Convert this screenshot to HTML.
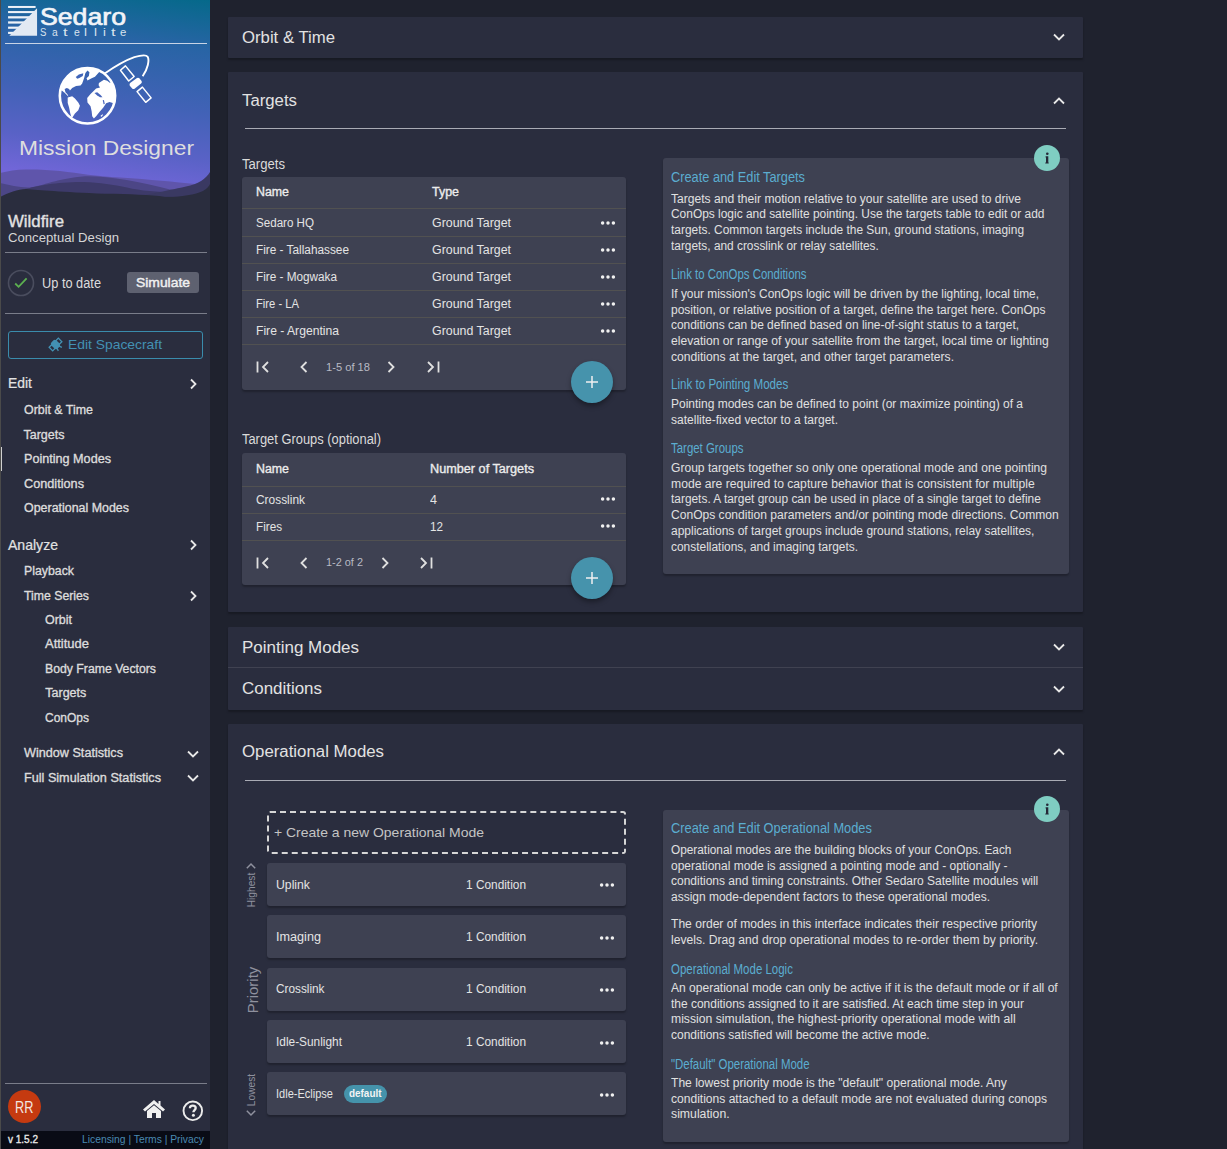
<!DOCTYPE html>
<html><head><meta charset="utf-8"><style>
html,body{margin:0;padding:0;}
body{width:1227px;height:1149px;overflow:hidden;position:relative;background:#1f222e;font-family:"Liberation Sans",sans-serif;}
.t{position:absolute;white-space:pre;line-height:1;}
</style></head><body>
<div style="position:absolute;left:0px;top:0px;width:210px;height:1149px;background:#2a2d3e;"></div>
<div style="position:absolute;left:0;top:0;width:210px;height:200px;background:linear-gradient(188deg,#05698a 0%,#2864a5 22%,#4262b7 50%,#5962c6 70%,#7166d8 86%,#7a68e0 100%);"></div>
<svg style="position:absolute;left:0;top:160px" width="210" height="45" viewBox="0 0 210 45">
<path d="M0 13 C8 11 16 9.5 26 9.4 C38 9.3 50 9.8 60 11 C80 13.5 95 16 120 17.5 C150 19.5 175 22 195 24 L210 24 L210 45 L0 45 Z" fill="#5f55ab"/>
<path d="M0 23 C10 25 20 28 30 27.5 C42 26 58 18.5 85 16.3 C110 16 140 22 170 29.5 L210 30 L210 45 L0 45 Z" fill="#4c4686"/>
<path d="M25 29 C38 26 50 23 77 22 C95 22 108 24 122 26.5 C135 29.5 150 32 170 32 L210 32 L210 45 L25 45 Z" fill="#3d3a69"/>
<path d="M210 12 C206 19 198 24 186 26.5 C175 29 165 31 150 34 L140 36 L210 36 Z" fill="#3a3962"/>
<path d="M0 37 C8 33 18 29 26 29 C40 30 60 32 105 33.8 C130 34 150 35 165 36.8 C180 37 195 35 203 31 C207 29 209 26 210 24 L210 45 L0 45 Z" fill="#2a2d3e"/>
</svg>
<div style="position:absolute;left:0px;top:0px;width:1px;height:1149px;background:#4a4a4a;"></div>
<svg style="position:absolute;left:5px;top:3px" width="37" height="37" viewBox="0 0 1149 1149">
<g fill="#eef2f8">
<rect x="95" y="92" width="855" height="62"/>
<rect x="95" y="250" width="895" height="64"/>
<rect x="95" y="410" width="895" height="70"/>
<rect x="95" y="570" width="895" height="70"/>
<rect x="95" y="733" width="895" height="68"/>
<rect x="95" y="895" width="895" height="66"/>
</g>
<path d="M995 165 L995 1018 L135 1018 Z" fill="#e2e9f3"/>
</svg>
<div style="position:absolute;left:5px;top:43px;width:202px;height:1px;background:#c8d4e6;"></div>
<svg style="position:absolute;left:56px;top:64px" width="64" height="64" viewBox="0 0 1149 1149">
<defs><clipPath id="gc"><circle cx="565" cy="570" r="500"/></clipPath></defs>
<circle cx="565" cy="570" r="497" fill="none" stroke="#fff" stroke-width="46"/>
<g clip-path="url(#gc)" fill="#fff">
<path d="M60 470 L60 0 L780 0 L780 140 L700 230 L640 255 L565 295 L548 255 L590 215 L600 150 L565 115 L528 160 L505 250 L470 350 L440 385 L360 395 L290 430 L250 475 L235 450 L195 430 L155 450 L170 505 L205 545 L225 590 L160 520 L110 480 Z"/>
<path d="M210 600 L290 580 L340 620 L400 690 L430 750 L400 830 L340 890 L300 950 L280 975 L255 880 L235 780 L210 700 Z"/>
<path d="M770 340 L860 285 L920 300 L965 335 L1120 335 L1120 700 L1020 700 L960 680 L900 705 L850 780 L780 860 L720 940 L680 980 L650 940 L640 850 L620 760 L565 690 L560 610 L620 540 L680 480 L720 440 L790 420 L765 380 Z"/>
<path d="M800 930 L835 900 L845 915 L810 950 Z"/>
</g>
<path d="M355 235 L410 190 L490 165 L480 215 L420 250 L380 265 Z" fill="#3f64b8"/>
<path d="M690 520 L740 505 L800 555 L835 595 L790 595 L735 560 Z" fill="#4766bb"/>
<path d="M850 650 L865 720" stroke="#4a66bc" stroke-width="22"/>
</svg>
<svg style="position:absolute;left:110px;top:55px;overflow:visible" width="50" height="50" viewBox="0 0 1149 1149">
<path d="M-130 430 C60 300 330 130 560 50 C700 10 830 -10 865 40 C910 120 870 320 750 490" fill="none" stroke="#fff" stroke-width="44"/>
<path d="M240 352 L355 250 L555 495 L430 598 Z" fill="none" stroke="#fff" stroke-width="34" stroke-linejoin="round"/>
<path d="M622 842 L745 738 L945 985 L820 1087 Z" fill="none" stroke="#fff" stroke-width="34" stroke-linejoin="round"/>
<path d="M470 640 L620 530 Q650 510 675 535 L725 600 Q745 630 715 655 L565 775 Q535 795 510 770 L455 705 Q435 670 470 640 Z" fill="#fff"/>
</svg>
<div style="position:absolute;left:5px;top:252px;width:202px;height:1px;background:#7a7d8a;"></div>
<svg style="position:absolute;left:7px;top:269px" width="28" height="28" viewBox="0 0 28 28">
<circle cx="14" cy="14" r="12.5" fill="none" stroke="#4a4d5e" stroke-width="1.6"/>
<path d="M8.2 14.5 L11.6 17.8 L19.6 9.3" fill="none" stroke="#5cb050" stroke-width="1.8"/>
</svg>
<div style="position:absolute;left:126.7px;top:272px;width:72.3px;height:21px;background:#5e6170;border-radius:3px;"></div>
<div style="position:absolute;left:5px;top:313px;width:202px;height:1px;background:#7a7d8a;"></div>
<div style="position:absolute;left:8px;top:330.5px;width:195px;height:28.5px;background:transparent;box-sizing:border-box;border:1.5px solid #3a8cac;border-radius:3px;"></div>
<svg style="position:absolute;left:48px;top:337px" width="15" height="15" viewBox="0 0 15 15">
<g transform="rotate(-45 7.5 7.5)" fill="none" stroke="#4391b3" stroke-width="1.3">
<rect x="1" y="5" width="3.6" height="5"/><rect x="10.4" y="5" width="3.6" height="5"/>
<rect x="5" y="3.8" width="5" height="7.4" rx="1" fill="#4391b3"/>
<path d="M6 11.2 L5 14 M9 11.2 L10 14" />
</g></svg>
<svg style="position:absolute;left:187px;top:378px" width="12" height="12" viewBox="0 0 12 12"><path d="M4 1.5 L8.5 6 L4 10.5" fill="none" stroke="#e8e8e8" stroke-width="1.8"/></svg>
<div style="position:absolute;left:1px;top:447px;width:1px;height:24px;background:#d0d0d0;"></div>
<svg style="position:absolute;left:187px;top:539px" width="12" height="12" viewBox="0 0 12 12"><path d="M4 1.5 L8.5 6 L4 10.5" fill="none" stroke="#e8e8e8" stroke-width="1.8"/></svg>
<svg style="position:absolute;left:187px;top:589.5px" width="12" height="12" viewBox="0 0 12 12"><path d="M4 1.5 L8.5 6 L4 10.5" fill="none" stroke="#e8e8e8" stroke-width="1.8"/></svg>
<svg style="position:absolute;left:186px;top:746.5px" width="14" height="14" viewBox="0 0 14 14"><path d="M2 4.5 L7 9.5 L12 4.5" fill="none" stroke="#e8e8e8" stroke-width="1.8"/></svg>
<svg style="position:absolute;left:186px;top:771px" width="14" height="14" viewBox="0 0 14 14"><path d="M2 4.5 L7 9.5 L12 4.5" fill="none" stroke="#e8e8e8" stroke-width="1.8"/></svg>
<div style="position:absolute;left:5px;top:1083px;width:202px;height:1px;background:#7a7d8a;"></div>
<div style="position:absolute;left:8px;top:1090px;width:33px;height:33px;border-radius:50%;background:#c53a10;"></div>
<svg style="position:absolute;left:142px;top:1099px" width="24" height="20" viewBox="0 0 24 20">
<path d="M12 1 L1 10.5 L3 12.5 L12 5 L21 12.5 L23 10.5 L18.5 6.6 V2 H16.5 V4.9 Z" fill="#f0f0f0"/>
<path d="M5 12 L12 6.3 L19 12 V19 H14 V14 H10 V19 H5 Z" fill="#f0f0f0"/></svg>
<svg style="position:absolute;left:181px;top:1099px" width="23" height="23" viewBox="0 0 23 23">
<circle cx="11.8" cy="11.8" r="9.3" fill="none" stroke="#ececec" stroke-width="1.9"/>
<path d="M8.9 9.2 C8.9 7.6 10.2 6.6 11.8 6.6 C13.5 6.6 14.7 7.6 14.7 9.1 C14.7 11 12.4 11.2 12.4 13.2" fill="none" stroke="#ececec" stroke-width="2.3"/>
<circle cx="12.4" cy="16.2" r="1.5" fill="#ececec"/></svg>
<div style="position:absolute;left:1px;top:1131px;width:209px;height:18px;background:#090b15;"></div>
<div style="position:absolute;left:228px;top:17px;width:855px;height:41px;background:#2a2d3e;border-radius:1px;box-shadow:0 2px 2px rgba(0,0,0,0.25);"></div>
<svg style="position:absolute;left:1051.5px;top:30px" width="14" height="14" viewBox="0 0 14 14"><path d="M2 4.5 L7 9.5 L12 4.5" fill="none" stroke="#e8e8e8" stroke-width="1.8"/></svg>
<div style="position:absolute;left:228px;top:72px;width:855px;height:540px;background:#2a2d3e;border-radius:1px;box-shadow:0 2px 2px rgba(0,0,0,0.25);"></div>
<svg style="position:absolute;left:1051.5px;top:93.5px" width="14" height="14" viewBox="0 0 14 14"><path d="M2 9.5 L7 4.5 L12 9.5" fill="none" stroke="#e8e8e8" stroke-width="1.8"/></svg>
<div style="position:absolute;left:245px;top:128px;width:821px;height:1px;background:#a9abb4;"></div>
<div style="position:absolute;left:242px;top:177px;width:384px;height:213px;background:#3e4152;border-radius:3px;box-shadow:0 2px 2px rgba(0,0,0,0.25);"></div>
<div style="position:absolute;left:242px;top:208px;width:384px;height:1px;background:#515151;"></div>
<svg style="position:absolute;left:600px;top:219.5px" width="16" height="6" viewBox="0 0 16 6"><circle cx="2.6" cy="3" r="1.75" fill="#f0f0f0"/><circle cx="8" cy="3" r="1.75" fill="#f0f0f0"/><circle cx="13.4" cy="3" r="1.75" fill="#f0f0f0"/></svg>
<div style="position:absolute;left:242px;top:235.5px;width:384px;height:1px;background:#515151;"></div>
<svg style="position:absolute;left:600px;top:246.5px" width="16" height="6" viewBox="0 0 16 6"><circle cx="2.6" cy="3" r="1.75" fill="#f0f0f0"/><circle cx="8" cy="3" r="1.75" fill="#f0f0f0"/><circle cx="13.4" cy="3" r="1.75" fill="#f0f0f0"/></svg>
<div style="position:absolute;left:242px;top:262.5px;width:384px;height:1px;background:#515151;"></div>
<svg style="position:absolute;left:600px;top:273.5px" width="16" height="6" viewBox="0 0 16 6"><circle cx="2.6" cy="3" r="1.75" fill="#f0f0f0"/><circle cx="8" cy="3" r="1.75" fill="#f0f0f0"/><circle cx="13.4" cy="3" r="1.75" fill="#f0f0f0"/></svg>
<div style="position:absolute;left:242px;top:289.5px;width:384px;height:1px;background:#515151;"></div>
<svg style="position:absolute;left:600px;top:300.5px" width="16" height="6" viewBox="0 0 16 6"><circle cx="2.6" cy="3" r="1.75" fill="#f0f0f0"/><circle cx="8" cy="3" r="1.75" fill="#f0f0f0"/><circle cx="13.4" cy="3" r="1.75" fill="#f0f0f0"/></svg>
<div style="position:absolute;left:242px;top:316.5px;width:384px;height:1px;background:#515151;"></div>
<svg style="position:absolute;left:600px;top:327.5px" width="16" height="6" viewBox="0 0 16 6"><circle cx="2.6" cy="3" r="1.75" fill="#f0f0f0"/><circle cx="8" cy="3" r="1.75" fill="#f0f0f0"/><circle cx="13.4" cy="3" r="1.75" fill="#f0f0f0"/></svg>
<div style="position:absolute;left:242px;top:343.5px;width:384px;height:1px;background:#515151;"></div>
<svg style="position:absolute;left:255px;top:360px" width="16" height="14" viewBox="0 0 16 14"><path d="M2.5 1.5 V12.5" stroke="#e0e0e0" stroke-width="1.8"/><path d="M13 2 L8 7 L13 12" fill="none" stroke="#e0e0e0" stroke-width="1.8"/></svg>
<svg style="position:absolute;left:298px;top:360px" width="12" height="14" viewBox="0 0 12 14"><path d="M8.5 2 L3.5 7 L8.5 12" fill="none" stroke="#e0e0e0" stroke-width="1.8"/></svg>
<svg style="position:absolute;left:385px;top:360px" width="12" height="14" viewBox="0 0 12 14"><path d="M3.5 2 L8.5 7 L3.5 12" fill="none" stroke="#e0e0e0" stroke-width="1.8"/></svg>
<svg style="position:absolute;left:425px;top:360px" width="16" height="14" viewBox="0 0 16 14"><path d="M3 2 L8 7 L3 12" fill="none" stroke="#e0e0e0" stroke-width="1.8"/><path d="M13.5 1.5 V12.5" stroke="#e0e0e0" stroke-width="1.8"/></svg>
<div style="position:absolute;left:571px;top:361px;width:42px;height:42px;border-radius:50%;background:#4693ac;box-shadow:0 3px 5px rgba(0,0,0,0.35);"></div>
<svg style="position:absolute;left:585px;top:375px" width="14" height="14" viewBox="0 0 14 14"><path d="M7 1 V13 M1 7 H13" stroke="#f0f0f0" stroke-width="1.5"/></svg>
<div style="position:absolute;left:242px;top:453px;width:384px;height:132px;background:#3e4152;border-radius:3px;box-shadow:0 2px 2px rgba(0,0,0,0.25);"></div>
<div style="position:absolute;left:242px;top:485.5px;width:384px;height:1px;background:#515151;"></div>
<svg style="position:absolute;left:600px;top:496px" width="16" height="6" viewBox="0 0 16 6"><circle cx="2.6" cy="3" r="1.75" fill="#f0f0f0"/><circle cx="8" cy="3" r="1.75" fill="#f0f0f0"/><circle cx="13.4" cy="3" r="1.75" fill="#f0f0f0"/></svg>
<svg style="position:absolute;left:600px;top:523px" width="16" height="6" viewBox="0 0 16 6"><circle cx="2.6" cy="3" r="1.75" fill="#f0f0f0"/><circle cx="8" cy="3" r="1.75" fill="#f0f0f0"/><circle cx="13.4" cy="3" r="1.75" fill="#f0f0f0"/></svg>
<div style="position:absolute;left:242px;top:512.5px;width:384px;height:1px;background:#515151;"></div>
<div style="position:absolute;left:242px;top:539.5px;width:384px;height:1px;background:#515151;"></div>
<svg style="position:absolute;left:255px;top:555.5px" width="16" height="14" viewBox="0 0 16 14"><path d="M2.5 1.5 V12.5" stroke="#e0e0e0" stroke-width="1.8"/><path d="M13 2 L8 7 L13 12" fill="none" stroke="#e0e0e0" stroke-width="1.8"/></svg>
<svg style="position:absolute;left:298px;top:555.5px" width="12" height="14" viewBox="0 0 12 14"><path d="M8.5 2 L3.5 7 L8.5 12" fill="none" stroke="#e0e0e0" stroke-width="1.8"/></svg>
<svg style="position:absolute;left:379px;top:555.5px" width="12" height="14" viewBox="0 0 12 14"><path d="M3.5 2 L8.5 7 L3.5 12" fill="none" stroke="#e0e0e0" stroke-width="1.8"/></svg>
<svg style="position:absolute;left:418px;top:555.5px" width="16" height="14" viewBox="0 0 16 14"><path d="M3 2 L8 7 L3 12" fill="none" stroke="#e0e0e0" stroke-width="1.8"/><path d="M13.5 1.5 V12.5" stroke="#e0e0e0" stroke-width="1.8"/></svg>
<div style="position:absolute;left:571px;top:556.5px;width:42px;height:42px;border-radius:50%;background:#4693ac;box-shadow:0 3px 5px rgba(0,0,0,0.35);"></div>
<svg style="position:absolute;left:585px;top:570.5px" width="14" height="14" viewBox="0 0 14 14"><path d="M7 1 V13 M1 7 H13" stroke="#f0f0f0" stroke-width="1.5"/></svg>
<div style="position:absolute;left:662.5px;top:158px;width:406px;height:416px;background:#3e4152;border-radius:3px;box-shadow:0 2px 2px rgba(0,0,0,0.25);"></div>
<div style="position:absolute;left:1034px;top:145px;width:26px;height:26px;border-radius:50%;background:#7fcdc2;"></div>
<svg style="position:absolute;left:1042px;top:151px" width="10" height="14" viewBox="0 0 10 14"><circle cx="5.3" cy="2.7" r="1.3" fill="#252838"/><path d="M3.6 5.3 H6.3 V11.4 H6.7 V12.6 H3.3 V11.6 H4 V6.4 H3.6 Z" fill="#252838"/></svg>
<div style="position:absolute;left:228px;top:626.5px;width:855px;height:83.5px;background:#2a2d3e;border-radius:1px;box-shadow:0 2px 2px rgba(0,0,0,0.25);"></div>
<div style="position:absolute;left:228px;top:667px;width:855px;height:1px;background:#404251;"></div>
<svg style="position:absolute;left:1051.5px;top:640px" width="14" height="14" viewBox="0 0 14 14"><path d="M2 4.5 L7 9.5 L12 4.5" fill="none" stroke="#e8e8e8" stroke-width="1.8"/></svg>
<svg style="position:absolute;left:1051.5px;top:682px" width="14" height="14" viewBox="0 0 14 14"><path d="M2 4.5 L7 9.5 L12 4.5" fill="none" stroke="#e8e8e8" stroke-width="1.8"/></svg>
<div style="position:absolute;left:228px;top:724px;width:855px;height:440px;background:#2a2d3e;border-radius:1px;box-shadow:0 2px 2px rgba(0,0,0,0.25);"></div>
<svg style="position:absolute;left:1051.5px;top:744.5px" width="14" height="14" viewBox="0 0 14 14"><path d="M2 9.5 L7 4.5 L12 9.5" fill="none" stroke="#e8e8e8" stroke-width="1.8"/></svg>
<div style="position:absolute;left:245px;top:780px;width:821px;height:1px;background:#a9abb4;"></div>
<div style="position:absolute;left:267px;top:810.5px;width:359px;height:43px;box-sizing:border-box;border:2px dashed #d6d6d6;border-radius:3px;"></div>
<div style="position:absolute;left:267px;top:863px;width:359px;height:43px;background:#3e4152;border-radius:3px;box-shadow:0 2px 2px rgba(0,0,0,0.25);"></div>
<svg style="position:absolute;left:598.5px;top:882.3px" width="16" height="6" viewBox="0 0 16 6"><circle cx="2.6" cy="3" r="1.75" fill="#f0f0f0"/><circle cx="8" cy="3" r="1.75" fill="#f0f0f0"/><circle cx="13.4" cy="3" r="1.75" fill="#f0f0f0"/></svg>
<div style="position:absolute;left:267px;top:915.3px;width:359px;height:43px;background:#3e4152;border-radius:3px;box-shadow:0 2px 2px rgba(0,0,0,0.25);"></div>
<svg style="position:absolute;left:598.5px;top:934.5999999999999px" width="16" height="6" viewBox="0 0 16 6"><circle cx="2.6" cy="3" r="1.75" fill="#f0f0f0"/><circle cx="8" cy="3" r="1.75" fill="#f0f0f0"/><circle cx="13.4" cy="3" r="1.75" fill="#f0f0f0"/></svg>
<div style="position:absolute;left:267px;top:967.5px;width:359px;height:43px;background:#3e4152;border-radius:3px;box-shadow:0 2px 2px rgba(0,0,0,0.25);"></div>
<svg style="position:absolute;left:598.5px;top:986.8px" width="16" height="6" viewBox="0 0 16 6"><circle cx="2.6" cy="3" r="1.75" fill="#f0f0f0"/><circle cx="8" cy="3" r="1.75" fill="#f0f0f0"/><circle cx="13.4" cy="3" r="1.75" fill="#f0f0f0"/></svg>
<div style="position:absolute;left:267px;top:1020.2px;width:359px;height:43px;background:#3e4152;border-radius:3px;box-shadow:0 2px 2px rgba(0,0,0,0.25);"></div>
<svg style="position:absolute;left:598.5px;top:1039.5px" width="16" height="6" viewBox="0 0 16 6"><circle cx="2.6" cy="3" r="1.75" fill="#f0f0f0"/><circle cx="8" cy="3" r="1.75" fill="#f0f0f0"/><circle cx="13.4" cy="3" r="1.75" fill="#f0f0f0"/></svg>
<div style="position:absolute;left:267px;top:1072.2px;width:359px;height:43px;background:#3e4152;border-radius:3px;box-shadow:0 2px 2px rgba(0,0,0,0.25);"></div>
<svg style="position:absolute;left:598.5px;top:1091.5px" width="16" height="6" viewBox="0 0 16 6"><circle cx="2.6" cy="3" r="1.75" fill="#f0f0f0"/><circle cx="8" cy="3" r="1.75" fill="#f0f0f0"/><circle cx="13.4" cy="3" r="1.75" fill="#f0f0f0"/></svg>
<div style="position:absolute;left:344px;top:1085.3px;width:43px;height:17.7px;border-radius:9px;background:#4593ab;"></div>
<div style="position:absolute;left:211.5px;top:850px;width:80px;height:80px;"><span style="position:absolute;left:50%;top:50%;transform:translate(-50%,-50%) rotate(-90deg);white-space:nowrap;font-size:10.2px;line-height:10.2px;color:#8f919e;">Highest</span></div>
<svg style="position:absolute;left:245px;top:861px" width="12" height="9" viewBox="0 0 12 9"><path d="M1.8 7.2 L6 3 L10.2 7.2" fill="none" stroke="#8f919e" stroke-width="1.5"/></svg>
<div style="position:absolute;left:211.5px;top:949.5px;width:80px;height:80px;"><span style="position:absolute;left:50%;top:50%;transform:translate(-50%,-50%) rotate(-90deg);white-space:nowrap;font-size:15px;line-height:15px;color:#8f919e;">Priority</span></div>
<div style="position:absolute;left:211.5px;top:1050.4px;width:80px;height:80px;"><span style="position:absolute;left:50%;top:50%;transform:translate(-50%,-50%) rotate(-90deg);white-space:nowrap;font-size:10.2px;line-height:10.2px;color:#8f919e;">Lowest</span></div>
<svg style="position:absolute;left:244.5px;top:1109px" width="12" height="9" viewBox="0 0 12 9"><path d="M1.8 1.8 L6 6 L10.2 1.8" fill="none" stroke="#8f919e" stroke-width="1.5"/></svg>
<div style="position:absolute;left:662.5px;top:809.5px;width:406px;height:332px;background:#3e4152;border-radius:3px;box-shadow:0 2px 2px rgba(0,0,0,0.25);"></div>
<div style="position:absolute;left:1034px;top:795.5px;width:26px;height:26px;border-radius:50%;background:#7fcdc2;"></div>
<svg style="position:absolute;left:1042px;top:801.5px" width="10" height="14" viewBox="0 0 10 14"><circle cx="5.3" cy="2.7" r="1.3" fill="#252838"/><path d="M3.6 5.3 H6.3 V11.4 H6.7 V12.6 H3.3 V11.6 H4 V6.4 H3.6 Z" fill="#252838"/></svg>
<span class="t" style="left:40px;top:5.00px;font-size:24px;color:#f2f4f8;font-weight:400;font-family:'Liberation Sans',sans-serif;transform:scaleX(1.1112);transform-origin:0 0;-webkit-text-stroke:0.7px;">Sedaro</span>
<span class="t" style="left:39.9px;top:28.00px;font-size:10px;color:#d8e2ee;font-weight:400;font-family:'Liberation Sans',sans-serif;transform:scaleX(0.9593);transform-origin:0 0;">S</span>
<span class="t" style="left:51.9px;top:28.00px;font-size:10px;color:#d8e2ee;font-weight:400;font-family:'Liberation Sans',sans-serif;transform:scaleX(1.0247);transform-origin:0 0;">a</span>
<span class="t" style="left:63.4px;top:28.00px;font-size:10px;color:#d8e2ee;font-weight:400;font-family:'Liberation Sans',sans-serif;transform:scaleX(1.6539);transform-origin:0 0;">t</span>
<span class="t" style="left:73.60000000000001px;top:28.00px;font-size:10px;color:#d8e2ee;font-weight:400;font-family:'Liberation Sans',sans-serif;transform:scaleX(1.0427);transform-origin:0 0;">e</span>
<span class="t" style="left:84.4px;top:28.00px;font-size:10px;color:#d8e2ee;font-weight:400;font-family:'Liberation Sans',sans-serif;transform:scaleX(1.3427);transform-origin:0 0;">l</span>
<span class="t" style="left:94.10000000000001px;top:28.00px;font-size:10px;color:#d8e2ee;font-weight:400;font-family:'Liberation Sans',sans-serif;transform:scaleX(1.3427);transform-origin:0 0;">l</span>
<span class="t" style="left:102.7px;top:28.00px;font-size:10px;color:#d8e2ee;font-weight:400;font-family:'Liberation Sans',sans-serif;transform:scaleX(1.2979);transform-origin:0 0;">i</span>
<span class="t" style="left:111.30000000000001px;top:28.00px;font-size:10px;color:#d8e2ee;font-weight:400;font-family:'Liberation Sans',sans-serif;transform:scaleX(1.6539);transform-origin:0 0;">t</span>
<span class="t" style="left:120.4px;top:28.00px;font-size:10px;color:#d8e2ee;font-weight:400;font-family:'Liberation Sans',sans-serif;transform:scaleX(1.1326);transform-origin:0 0;">e</span>
<span class="t" style="left:18.6px;top:138.00px;font-size:20.5px;color:#dedede;font-weight:400;font-family:'Liberation Sans',sans-serif;transform:scaleX(1.1130);transform-origin:0 0;">Mission Designer</span>
<span class="t" style="left:8px;top:214.00px;font-size:16px;color:#e2e2e2;font-weight:400;font-family:'Liberation Sans',sans-serif;transform:scaleX(1.0498);transform-origin:0 0;-webkit-text-stroke:0.35px;">Wildfire</span>
<span class="t" style="left:8px;top:232.00px;font-size:12.5px;color:#d6d6d6;font-weight:400;font-family:'Liberation Sans',sans-serif;transform:scaleX(1.0509);transform-origin:0 0;">Conceptual Design</span>
<span class="t" style="left:42px;top:276.00px;font-size:14px;color:#dcdcdc;font-weight:400;font-family:'Liberation Sans',sans-serif;transform:scaleX(0.9132);transform-origin:0 0;">Up to date</span>
<span class="t" style="left:135.7px;top:276.00px;font-size:13.5px;color:#f0f0f0;font-weight:400;font-family:'Liberation Sans',sans-serif;transform:scaleX(1.0280);transform-origin:0 0;-webkit-text-stroke:0.45px;">Simulate</span>
<span class="t" style="left:68px;top:338.00px;font-size:13px;color:#4391b3;font-weight:400;font-family:'Liberation Sans',sans-serif;transform:scaleX(1.0663);transform-origin:0 0;">Edit Spacecraft</span>
<span class="t" style="left:8px;top:375.00px;font-size:15px;color:#e2e2e2;font-weight:400;font-family:'Liberation Sans',sans-serif;transform:scaleX(0.9281);transform-origin:0 0;-webkit-text-stroke:0.2px;">Edit</span>
<span class="t" style="left:23.5px;top:404.00px;font-size:12.5px;color:#dcdcdc;font-weight:400;font-family:'Liberation Sans',sans-serif;transform:scaleX(0.9933);transform-origin:0 0;-webkit-text-stroke:0.35px;">Orbit & Time</span>
<span class="t" style="left:23.5px;top:429.00px;font-size:12.5px;color:#dcdcdc;font-weight:400;font-family:'Liberation Sans',sans-serif;-webkit-text-stroke:0.35px;">Targets</span>
<span class="t" style="left:23.5px;top:453.00px;font-size:12.5px;color:#dcdcdc;font-weight:400;font-family:'Liberation Sans',sans-serif;transform:scaleX(1.0096);transform-origin:0 0;-webkit-text-stroke:0.35px;">Pointing Modes</span>
<span class="t" style="left:23.5px;top:478.00px;font-size:12.5px;color:#dcdcdc;font-weight:400;font-family:'Liberation Sans',sans-serif;transform:scaleX(1.0156);transform-origin:0 0;-webkit-text-stroke:0.35px;">Conditions</span>
<span class="t" style="left:23.5px;top:502.00px;font-size:12.5px;color:#dcdcdc;font-weight:400;font-family:'Liberation Sans',sans-serif;transform:scaleX(0.9941);transform-origin:0 0;-webkit-text-stroke:0.35px;">Operational Modes</span>
<span class="t" style="left:8px;top:537.00px;font-size:15px;color:#e2e2e2;font-weight:400;font-family:'Liberation Sans',sans-serif;transform:scaleX(0.9368);transform-origin:0 0;-webkit-text-stroke:0.2px;">Analyze</span>
<span class="t" style="left:23.5px;top:565.00px;font-size:12.5px;color:#dcdcdc;font-weight:400;font-family:'Liberation Sans',sans-serif;transform:scaleX(0.9855);transform-origin:0 0;-webkit-text-stroke:0.35px;">Playback</span>
<span class="t" style="left:23.5px;top:590.00px;font-size:12.5px;color:#dcdcdc;font-weight:400;font-family:'Liberation Sans',sans-serif;transform:scaleX(0.9816);transform-origin:0 0;-webkit-text-stroke:0.35px;">Time Series</span>
<span class="t" style="left:45.3px;top:614.00px;font-size:12.5px;color:#dcdcdc;font-weight:400;font-family:'Liberation Sans',sans-serif;transform:scaleX(0.9965);transform-origin:0 0;-webkit-text-stroke:0.35px;">Orbit</span>
<span class="t" style="left:45.3px;top:638.00px;font-size:12.5px;color:#dcdcdc;font-weight:400;font-family:'Liberation Sans',sans-serif;transform:scaleX(1.0380);transform-origin:0 0;-webkit-text-stroke:0.35px;">Attitude</span>
<span class="t" style="left:45.3px;top:663.00px;font-size:12.5px;color:#dcdcdc;font-weight:400;font-family:'Liberation Sans',sans-serif;transform:scaleX(0.9801);transform-origin:0 0;-webkit-text-stroke:0.35px;">Body Frame Vectors</span>
<span class="t" style="left:45.3px;top:687.00px;font-size:12.5px;color:#dcdcdc;font-weight:400;font-family:'Liberation Sans',sans-serif;-webkit-text-stroke:0.35px;">Targets</span>
<span class="t" style="left:45.3px;top:712.00px;font-size:12.5px;color:#dcdcdc;font-weight:400;font-family:'Liberation Sans',sans-serif;transform:scaleX(0.9595);transform-origin:0 0;-webkit-text-stroke:0.35px;">ConOps</span>
<span class="t" style="left:23.5px;top:747.00px;font-size:12.5px;color:#dcdcdc;font-weight:400;font-family:'Liberation Sans',sans-serif;transform:scaleX(1.0107);transform-origin:0 0;-webkit-text-stroke:0.35px;">Window Statistics</span>
<span class="t" style="left:23.5px;top:772.00px;font-size:12.5px;color:#dcdcdc;font-weight:400;font-family:'Liberation Sans',sans-serif;transform:scaleX(1.0113);transform-origin:0 0;-webkit-text-stroke:0.35px;">Full Simulation Statistics</span>
<span class="t" style="left:15.2px;top:1099.00px;font-size:16.5px;color:#f2e6e0;font-weight:400;font-family:'Liberation Sans',sans-serif;transform:scaleX(0.7717);transform-origin:0 0;">RR</span>
<span class="t" style="left:7.5px;top:1134.00px;font-size:10.5px;color:#e8e8e8;font-weight:400;font-family:'Liberation Sans',sans-serif;transform:scaleX(0.9514);transform-origin:0 0;-webkit-text-stroke:0.35px;">v 1.5.2</span>
<span class="t" style="left:81.5px;top:1134.00px;font-size:10.5px;color:#4a8ab2;font-weight:400;font-family:'Liberation Sans',sans-serif;transform:scaleX(0.9814);transform-origin:0 0;">Licensing | Terms | Privacy</span>
<span class="t" style="left:242px;top:30.00px;font-size:15.8px;color:#e2e2e2;font-weight:400;font-family:'Liberation Sans',sans-serif;transform:scaleX(1.0595);transform-origin:0 0;">Orbit & Time</span>
<span class="t" style="left:242px;top:93.00px;font-size:15.8px;color:#e2e2e2;font-weight:400;font-family:'Liberation Sans',sans-serif;transform:scaleX(1.0615);transform-origin:0 0;">Targets</span>
<span class="t" style="left:242px;top:157.00px;font-size:14px;color:#dadada;font-weight:400;font-family:'Liberation Sans',sans-serif;transform:scaleX(0.9364);transform-origin:0 0;">Targets</span>
<span class="t" style="left:255.8px;top:186.00px;font-size:12.5px;color:#ececec;font-weight:400;font-family:'Liberation Sans',sans-serif;transform:scaleX(0.9897);transform-origin:0 0;-webkit-text-stroke:0.35px;">Name</span>
<span class="t" style="left:431.5px;top:186.00px;font-size:12.5px;color:#ececec;font-weight:400;font-family:'Liberation Sans',sans-serif;transform:scaleX(0.9960);transform-origin:0 0;-webkit-text-stroke:0.35px;">Type</span>
<span class="t" style="left:255.8px;top:217.00px;font-size:12px;color:#e4e4e4;font-weight:400;font-family:'Liberation Sans',sans-serif;transform:scaleX(0.9662);transform-origin:0 0;">Sedaro HQ</span>
<span class="t" style="left:431.5px;top:217.00px;font-size:12px;color:#e4e4e4;font-weight:400;font-family:'Liberation Sans',sans-serif;transform:scaleX(1.0327);transform-origin:0 0;">Ground Target</span>
<span class="t" style="left:255.8px;top:244.00px;font-size:12px;color:#e4e4e4;font-weight:400;font-family:'Liberation Sans',sans-serif;transform:scaleX(0.9841);transform-origin:0 0;">Fire - Tallahassee</span>
<span class="t" style="left:431.5px;top:244.00px;font-size:12px;color:#e4e4e4;font-weight:400;font-family:'Liberation Sans',sans-serif;transform:scaleX(1.0327);transform-origin:0 0;">Ground Target</span>
<span class="t" style="left:255.8px;top:271.00px;font-size:12px;color:#e4e4e4;font-weight:400;font-family:'Liberation Sans',sans-serif;transform:scaleX(0.9796);transform-origin:0 0;">Fire - Mogwaka</span>
<span class="t" style="left:431.5px;top:271.00px;font-size:12px;color:#e4e4e4;font-weight:400;font-family:'Liberation Sans',sans-serif;transform:scaleX(1.0327);transform-origin:0 0;">Ground Target</span>
<span class="t" style="left:255.8px;top:298.00px;font-size:12px;color:#e4e4e4;font-weight:400;font-family:'Liberation Sans',sans-serif;transform:scaleX(0.9345);transform-origin:0 0;">Fire - LA</span>
<span class="t" style="left:431.5px;top:298.00px;font-size:12px;color:#e4e4e4;font-weight:400;font-family:'Liberation Sans',sans-serif;transform:scaleX(1.0327);transform-origin:0 0;">Ground Target</span>
<span class="t" style="left:255.8px;top:325.00px;font-size:12px;color:#e4e4e4;font-weight:400;font-family:'Liberation Sans',sans-serif;transform:scaleX(1.0116);transform-origin:0 0;">Fire - Argentina</span>
<span class="t" style="left:431.5px;top:325.00px;font-size:12px;color:#e4e4e4;font-weight:400;font-family:'Liberation Sans',sans-serif;transform:scaleX(1.0327);transform-origin:0 0;">Ground Target</span>
<span class="t" style="left:326px;top:362.00px;font-size:11.5px;color:#b8bac4;font-weight:400;font-family:'Liberation Sans',sans-serif;transform:scaleX(0.9690);transform-origin:0 0;">1-5 of 18</span>
<span class="t" style="left:242.4px;top:432.00px;font-size:14px;color:#dadada;font-weight:400;font-family:'Liberation Sans',sans-serif;transform:scaleX(0.9207);transform-origin:0 0;">Target Groups (optional)</span>
<span class="t" style="left:255.8px;top:463.00px;font-size:12.5px;color:#ececec;font-weight:400;font-family:'Liberation Sans',sans-serif;transform:scaleX(0.9897);transform-origin:0 0;-webkit-text-stroke:0.35px;">Name</span>
<span class="t" style="left:429.5px;top:463.00px;font-size:12.5px;color:#ececec;font-weight:400;font-family:'Liberation Sans',sans-serif;transform:scaleX(1.0136);transform-origin:0 0;-webkit-text-stroke:0.35px;">Number of Targets</span>
<span class="t" style="left:255.8px;top:494.00px;font-size:12px;color:#e4e4e4;font-weight:400;font-family:'Liberation Sans',sans-serif;transform:scaleX(0.9930);transform-origin:0 0;">Crosslink</span>
<span class="t" style="left:429.5px;top:494.00px;font-size:12px;color:#e4e4e4;font-weight:400;font-family:'Liberation Sans',sans-serif;transform:scaleX(1.0467);transform-origin:0 0;">4</span>
<span class="t" style="left:255.8px;top:521.00px;font-size:12px;color:#e4e4e4;font-weight:400;font-family:'Liberation Sans',sans-serif;transform:scaleX(0.9748);transform-origin:0 0;">Fires</span>
<span class="t" style="left:429.5px;top:521.00px;font-size:12px;color:#e4e4e4;font-weight:400;font-family:'Liberation Sans',sans-serif;transform:scaleX(0.9731);transform-origin:0 0;">12</span>
<span class="t" style="left:326px;top:557.00px;font-size:11.5px;color:#b8bac4;font-weight:400;font-family:'Liberation Sans',sans-serif;transform:scaleX(0.9487);transform-origin:0 0;">1-2 of 2</span>
<span class="t" style="left:671px;top:169.00px;font-size:15.5px;color:#5badd0;font-weight:400;font-family:'Liberation Sans',sans-serif;transform:scaleX(0.8243);transform-origin:0 0;">Create and Edit Targets</span>
<span class="t" style="left:671px;top:193.00px;font-size:12.5px;color:#e0e0e0;font-weight:400;font-family:'Liberation Sans',sans-serif;transform:scaleX(0.9669);transform-origin:0 0;">Targets and their motion relative to your satellite are used to drive</span>
<span class="t" style="left:671px;top:208.00px;font-size:12.5px;color:#e0e0e0;font-weight:400;font-family:'Liberation Sans',sans-serif;transform:scaleX(0.9545);transform-origin:0 0;">ConOps logic and satellite pointing. Use the targets table to edit or add</span>
<span class="t" style="left:671px;top:224.00px;font-size:12.5px;color:#e0e0e0;font-weight:400;font-family:'Liberation Sans',sans-serif;transform:scaleX(0.9532);transform-origin:0 0;">targets. Common targets include the Sun, ground stations, imaging</span>
<span class="t" style="left:671px;top:240.00px;font-size:12.5px;color:#e0e0e0;font-weight:400;font-family:'Liberation Sans',sans-serif;transform:scaleX(0.9495);transform-origin:0 0;">targets, and crosslink or relay satellites.</span>
<span class="t" style="left:671px;top:266.00px;font-size:15.5px;color:#5badd0;font-weight:400;font-family:'Liberation Sans',sans-serif;transform:scaleX(0.7349);transform-origin:0 0;">Link to ConOps Conditions</span>
<span class="t" style="left:671px;top:288.00px;font-size:12.5px;color:#e0e0e0;font-weight:400;font-family:'Liberation Sans',sans-serif;transform:scaleX(0.9502);transform-origin:0 0;">If your mission's ConOps logic will be driven by the lighting, local time,</span>
<span class="t" style="left:671px;top:304.00px;font-size:12.5px;color:#e0e0e0;font-weight:400;font-family:'Liberation Sans',sans-serif;transform:scaleX(0.9607);transform-origin:0 0;">position, or relative position of a target, define the target here. ConOps</span>
<span class="t" style="left:671px;top:319.00px;font-size:12.5px;color:#e0e0e0;font-weight:400;font-family:'Liberation Sans',sans-serif;transform:scaleX(0.9539);transform-origin:0 0;">conditions can be defined based on line-of-sight status to a target,</span>
<span class="t" style="left:671px;top:335.00px;font-size:12.5px;color:#e0e0e0;font-weight:400;font-family:'Liberation Sans',sans-serif;transform:scaleX(0.9690);transform-origin:0 0;">elevation or range of your satellite from the target, local time or lighting</span>
<span class="t" style="left:671px;top:351.00px;font-size:12.5px;color:#e0e0e0;font-weight:400;font-family:'Liberation Sans',sans-serif;transform:scaleX(0.9697);transform-origin:0 0;">conditions at the target, and other target parameters.</span>
<span class="t" style="left:671px;top:376.00px;font-size:15.5px;color:#5badd0;font-weight:400;font-family:'Liberation Sans',sans-serif;transform:scaleX(0.7480);transform-origin:0 0;">Link to Pointing Modes</span>
<span class="t" style="left:671px;top:398.00px;font-size:12.5px;color:#e0e0e0;font-weight:400;font-family:'Liberation Sans',sans-serif;transform:scaleX(0.9594);transform-origin:0 0;">Pointing modes can be defined to point (or maximize pointing) of a</span>
<span class="t" style="left:671px;top:414.00px;font-size:12.5px;color:#e0e0e0;font-weight:400;font-family:'Liberation Sans',sans-serif;transform:scaleX(0.9614);transform-origin:0 0;">satellite-fixed vector to a target.</span>
<span class="t" style="left:671px;top:440.00px;font-size:15.5px;color:#5badd0;font-weight:400;font-family:'Liberation Sans',sans-serif;transform:scaleX(0.7381);transform-origin:0 0;">Target Groups</span>
<span class="t" style="left:671px;top:462.00px;font-size:12.5px;color:#e0e0e0;font-weight:400;font-family:'Liberation Sans',sans-serif;transform:scaleX(0.9662);transform-origin:0 0;">Group targets together so only one operational mode and one pointing</span>
<span class="t" style="left:671px;top:478.00px;font-size:12.5px;color:#e0e0e0;font-weight:400;font-family:'Liberation Sans',sans-serif;transform:scaleX(0.9729);transform-origin:0 0;">mode are required to capture behavior that is consistent for multiple</span>
<span class="t" style="left:671px;top:493.00px;font-size:12.5px;color:#e0e0e0;font-weight:400;font-family:'Liberation Sans',sans-serif;transform:scaleX(0.9519);transform-origin:0 0;">targets. A target group can be used in place of a single target to define</span>
<span class="t" style="left:671px;top:509.00px;font-size:12.5px;color:#e0e0e0;font-weight:400;font-family:'Liberation Sans',sans-serif;transform:scaleX(0.9654);transform-origin:0 0;">ConOps condition parameters and/or pointing mode directions. Common</span>
<span class="t" style="left:671px;top:525.00px;font-size:12.5px;color:#e0e0e0;font-weight:400;font-family:'Liberation Sans',sans-serif;transform:scaleX(0.9596);transform-origin:0 0;">applications of target groups include ground stations, relay satellites,</span>
<span class="t" style="left:671px;top:541.00px;font-size:12.5px;color:#e0e0e0;font-weight:400;font-family:'Liberation Sans',sans-serif;transform:scaleX(0.9543);transform-origin:0 0;">constellations, and imaging targets.</span>
<span class="t" style="left:242.2px;top:640.00px;font-size:15.8px;color:#e2e2e2;font-weight:400;font-family:'Liberation Sans',sans-serif;transform:scaleX(1.0745);transform-origin:0 0;">Pointing Modes</span>
<span class="t" style="left:242.2px;top:681.00px;font-size:15.8px;color:#e2e2e2;font-weight:400;font-family:'Liberation Sans',sans-serif;transform:scaleX(1.0716);transform-origin:0 0;">Conditions</span>
<span class="t" style="left:242.2px;top:744.00px;font-size:15.8px;color:#e2e2e2;font-weight:400;font-family:'Liberation Sans',sans-serif;transform:scaleX(1.0638);transform-origin:0 0;">Operational Modes</span>
<span class="t" style="left:274px;top:826.00px;font-size:13px;color:#c4c4c4;font-weight:400;font-family:'Liberation Sans',sans-serif;transform:scaleX(1.0743);transform-origin:0 0;">+ Create a new Operational Mode</span>
<span class="t" style="left:275.8px;top:879.00px;font-size:12.5px;color:#e4e4e4;font-weight:400;font-family:'Liberation Sans',sans-serif;transform:scaleX(0.9784);transform-origin:0 0;">Uplink</span>
<span class="t" style="left:465.6px;top:879.00px;font-size:12.5px;color:#e4e4e4;font-weight:400;font-family:'Liberation Sans',sans-serif;transform:scaleX(0.9486);transform-origin:0 0;">1 Condition</span>
<span class="t" style="left:275.8px;top:931.00px;font-size:12.5px;color:#e4e4e4;font-weight:400;font-family:'Liberation Sans',sans-serif;transform:scaleX(1.0116);transform-origin:0 0;">Imaging</span>
<span class="t" style="left:465.6px;top:931.00px;font-size:12.5px;color:#e4e4e4;font-weight:400;font-family:'Liberation Sans',sans-serif;transform:scaleX(0.9486);transform-origin:0 0;">1 Condition</span>
<span class="t" style="left:275.8px;top:983.00px;font-size:12.5px;color:#e4e4e4;font-weight:400;font-family:'Liberation Sans',sans-serif;transform:scaleX(0.9435);transform-origin:0 0;">Crosslink</span>
<span class="t" style="left:465.6px;top:983.00px;font-size:12.5px;color:#e4e4e4;font-weight:400;font-family:'Liberation Sans',sans-serif;transform:scaleX(0.9486);transform-origin:0 0;">1 Condition</span>
<span class="t" style="left:275.8px;top:1036.00px;font-size:12.5px;color:#e4e4e4;font-weight:400;font-family:'Liberation Sans',sans-serif;transform:scaleX(0.9496);transform-origin:0 0;">Idle-Sunlight</span>
<span class="t" style="left:465.6px;top:1036.00px;font-size:12.5px;color:#e4e4e4;font-weight:400;font-family:'Liberation Sans',sans-serif;transform:scaleX(0.9486);transform-origin:0 0;">1 Condition</span>
<span class="t" style="left:275.8px;top:1088.00px;font-size:12.5px;color:#e4e4e4;font-weight:400;font-family:'Liberation Sans',sans-serif;transform:scaleX(0.8820);transform-origin:0 0;">Idle-Eclipse</span>
<span class="t" style="left:349.2px;top:1088.00px;font-size:11px;color:#f4f4f4;font-weight:700;font-family:'Liberation Sans',sans-serif;transform:scaleX(0.9012);transform-origin:0 0;">default</span>
<span class="t" style="left:671px;top:820.00px;font-size:15.5px;color:#5badd0;font-weight:400;font-family:'Liberation Sans',sans-serif;transform:scaleX(0.8268);transform-origin:0 0;">Create and Edit Operational Modes</span>
<span class="t" style="left:671px;top:844.00px;font-size:12.5px;color:#e0e0e0;font-weight:400;font-family:'Liberation Sans',sans-serif;transform:scaleX(0.9457);transform-origin:0 0;">Operational modes are the building blocks of your ConOps. Each</span>
<span class="t" style="left:671px;top:860.00px;font-size:12.5px;color:#e0e0e0;font-weight:400;font-family:'Liberation Sans',sans-serif;transform:scaleX(0.9589);transform-origin:0 0;">operational mode is assigned a pointing mode and - optionally -</span>
<span class="t" style="left:671px;top:875.00px;font-size:12.5px;color:#e0e0e0;font-weight:400;font-family:'Liberation Sans',sans-serif;transform:scaleX(0.9594);transform-origin:0 0;">conditions and timing constraints. Other Sedaro Satellite modules will</span>
<span class="t" style="left:671px;top:891.00px;font-size:12.5px;color:#e0e0e0;font-weight:400;font-family:'Liberation Sans',sans-serif;transform:scaleX(0.9584);transform-origin:0 0;">assign mode-dependent factors to these operational modes.</span>
<span class="t" style="left:671px;top:918.00px;font-size:12.5px;color:#e0e0e0;font-weight:400;font-family:'Liberation Sans',sans-serif;transform:scaleX(0.9666);transform-origin:0 0;">The order of modes in this interface indicates their respective priority</span>
<span class="t" style="left:671px;top:934.00px;font-size:12.5px;color:#e0e0e0;font-weight:400;font-family:'Liberation Sans',sans-serif;transform:scaleX(0.9698);transform-origin:0 0;">levels. Drag and drop operational modes to re-order them by priority.</span>
<span class="t" style="left:671px;top:961.00px;font-size:15.5px;color:#5badd0;font-weight:400;font-family:'Liberation Sans',sans-serif;transform:scaleX(0.7407);transform-origin:0 0;">Operational Mode Logic</span>
<span class="t" style="left:671px;top:982.00px;font-size:12.5px;color:#e0e0e0;font-weight:400;font-family:'Liberation Sans',sans-serif;transform:scaleX(0.9628);transform-origin:0 0;">An operational mode can only be active if it is the default mode or if all of</span>
<span class="t" style="left:671px;top:998.00px;font-size:12.5px;color:#e0e0e0;font-weight:400;font-family:'Liberation Sans',sans-serif;transform:scaleX(0.9567);transform-origin:0 0;">the conditions assigned to it are satisfied. At each time step in your</span>
<span class="t" style="left:671px;top:1013.00px;font-size:12.5px;color:#e0e0e0;font-weight:400;font-family:'Liberation Sans',sans-serif;transform:scaleX(0.9747);transform-origin:0 0;">mission simulation, the highest-priority operational mode with all</span>
<span class="t" style="left:671px;top:1029.00px;font-size:12.5px;color:#e0e0e0;font-weight:400;font-family:'Liberation Sans',sans-serif;transform:scaleX(0.9596);transform-origin:0 0;">conditions satisfied will become the active mode.</span>
<span class="t" style="left:671px;top:1056.00px;font-size:15.5px;color:#5badd0;font-weight:400;font-family:'Liberation Sans',sans-serif;transform:scaleX(0.7381);transform-origin:0 0;">"Default" Operational Mode</span>
<span class="t" style="left:671px;top:1077.00px;font-size:12.5px;color:#e0e0e0;font-weight:400;font-family:'Liberation Sans',sans-serif;transform:scaleX(0.9670);transform-origin:0 0;">The lowest priority mode is the "default" operational mode. Any</span>
<span class="t" style="left:671px;top:1093.00px;font-size:12.5px;color:#e0e0e0;font-weight:400;font-family:'Liberation Sans',sans-serif;transform:scaleX(0.9645);transform-origin:0 0;">conditions attached to a default mode are not evaluated during conops</span>
<span class="t" style="left:671px;top:1108.00px;font-size:12.5px;color:#e0e0e0;font-weight:400;font-family:'Liberation Sans',sans-serif;transform:scaleX(0.9808);transform-origin:0 0;">simulation.</span>
</body></html>
